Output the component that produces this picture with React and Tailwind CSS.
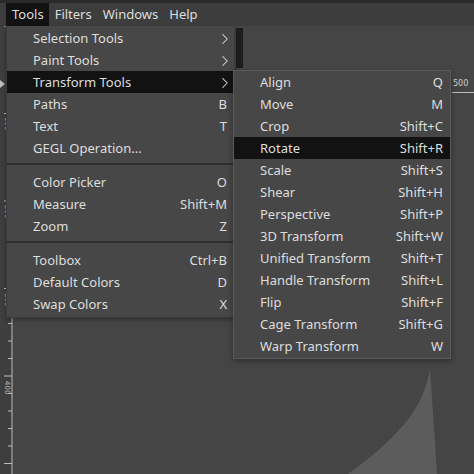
import { ChevronRight } from 'lucide-react'

const mainItems = [
  { label: 'Selection Tools', sub: true },
  { label: 'Paint Tools', sub: true },
  { label: 'Transform Tools', sub: true, active: true },
  { label: 'Paths', key: 'B' },
  { label: 'Text', key: 'T' },
  { label: 'GEGL Operation...' },
  { sep: true },
  { label: 'Color Picker', key: 'O' },
  { label: 'Measure', key: 'Shift+M' },
  { label: 'Zoom', key: 'Z' },
  { sep: true },
  { label: 'Toolbox', key: 'Ctrl+B' },
  { label: 'Default Colors', key: 'D' },
  { label: 'Swap Colors', key: 'X' },
]

const transformItems = [
  { label: 'Align', key: 'Q' },
  { label: 'Move', key: 'M' },
  { label: 'Crop', key: 'Shift+C' },
  { label: 'Rotate', key: 'Shift+R', active: true },
  { label: 'Scale', key: 'Shift+S' },
  { label: 'Shear', key: 'Shift+H' },
  { label: 'Perspective', key: 'Shift+P' },
  { label: '3D Transform', key: 'Shift+W' },
  { label: 'Unified Transform', key: 'Shift+T' },
  { label: 'Handle Transform', key: 'Shift+L' },
  { label: 'Flip', key: 'Shift+F' },
  { label: 'Cage Transform', key: 'Shift+G' },
  { label: 'Warp Transform', key: 'W' },
]

function MenuRow({ item }) {
  if (item.sep) {
    return (
      <div className="h-[12px] pt-[4px] flex-shrink-0">
        <div className="h-[2px] bg-[#2f2f2f]" />
      </div>
    )
  }
  return (
    <div
      className={`h-[22px] flex-shrink-0 flex items-center pl-[26px] pr-[7px] pt-px ${item.active ? 'bg-[#121212]' : ''}`}
    >
      <span className="flex-1 whitespace-nowrap">{item.label}</span>
      {item.sub && <ChevronRight size={18} strokeWidth={1.4} className="text-[#dcdcdc] -mr-[7px]" />}
      {item.key && <span className="whitespace-nowrap">{item.key}</span>}
    </div>
  )
}

function LeftRuler() {
  // vertical ruler on the left edge of the canvas
  const ticks = []
  for (let y = 0; y < 450; y += 17.5) ticks.push(y)
  return (
    <svg width="13" height="448" className="block">
      <line x1="12" y1="0" x2="12" y2="448" stroke="#bdbdbd" strokeWidth="1" />
      {ticks.map((y, i) => (
        <line key={i} x1={i % 5 === 0 ? 4 : 8} y1={y} x2="12" y2={y} stroke="#bdbdbd" strokeWidth="1" />
      ))}
      {[96, 184, 272, 360].map((y, i) => (
        <text
          key={i}
          x="0"
          y={y}
          fill="#bdbdbd"
          fontSize="7"
          fontFamily="'DejaVu Sans', sans-serif"
          transform={`rotate(90 5 ${y})`}
        >
          {`${i + 1}00`}
        </text>
      ))}
    </svg>
  )
}

export default function App() {
  return (
    <div
      className="relative w-[474px] h-[474px] overflow-hidden bg-[#454545] text-[#dedede] text-[13px] select-none"
      style={{ fontFamily: "'Noto Sans', 'Open Sans', sans-serif" }}
    >
      {/* top strip */}
      <div className="h-[3px] bg-[#2a2a2a]" />

      {/* menubar */}
      <div className="h-[23px] flex items-stretch bg-[#3d3d3d] text-[13px] pl-[6px]">
        <div className="pl-[6px] pr-[5px] flex items-center bg-[#121212]">Tools</div>
        <div className="pl-[6px] pr-[5px] flex items-center">Filters</div>
        <div className="pl-[6px] pr-[5px] flex items-center">Windows</div>
        <div className="pl-[6px] pr-[5px] flex items-center">Help</div>
      </div>

      {/* workspace */}
      <div className="flex h-[448px]">
        <div className="w-[13px] bg-[#3e3e3e] relative">
          <LeftRuler />
          <span className="absolute left-0 top-[54px] w-0 h-0 border-y-[4px] border-y-transparent border-l-[5px] border-l-[#bdbdbd]" />
        </div>
        <div className="flex-1 relative">
          <div className="absolute left-[223px] top-[2px] w-[7px] h-[40px] bg-[#1e1e1e]" />
          <div
            className="absolute left-[439px] top-[53px] right-0 h-[14px] border-b border-[#bdbdbd] text-[8px] leading-[10px] text-[#cfcfcf] pl-[1px]"
            style={{ fontFamily: "'DejaVu Sans', sans-serif" }}
          >
            500
          </div>
          <svg className="absolute left-[-13px] top-[-26px]" width="474" height="474">
            <path d="M430,368 C424,410 395,440 348,474 L437,474 C435,440 432,400 430,368 Z" fill="#5c5c5c" />
          </svg>
        </div>
      </div>

      {/* Tools menu */}
      <div className="absolute left-[6px] top-[26px] w-[229px] flex flex-col pt-px pb-[2px] bg-[#474747] border-x border-b border-[#3a3a3a] shadow-[0_2px_4px_rgba(0,0,0,0.3)]">
        {mainItems.map((item, i) => (
          <MenuRow key={i} item={item} />
        ))}
      </div>

      {/* Transform Tools submenu */}
      <div className="absolute left-[233px] top-[70px] w-[218px] flex flex-col pb-[1px] bg-[#474747] border border-[#5a5a5a] shadow-[0_2px_6px_rgba(0,0,0,0.35)]">
        {transformItems.map((item, i) => (
          <MenuRow key={i} item={item} />
        ))}
      </div>
    </div>
  )
}
